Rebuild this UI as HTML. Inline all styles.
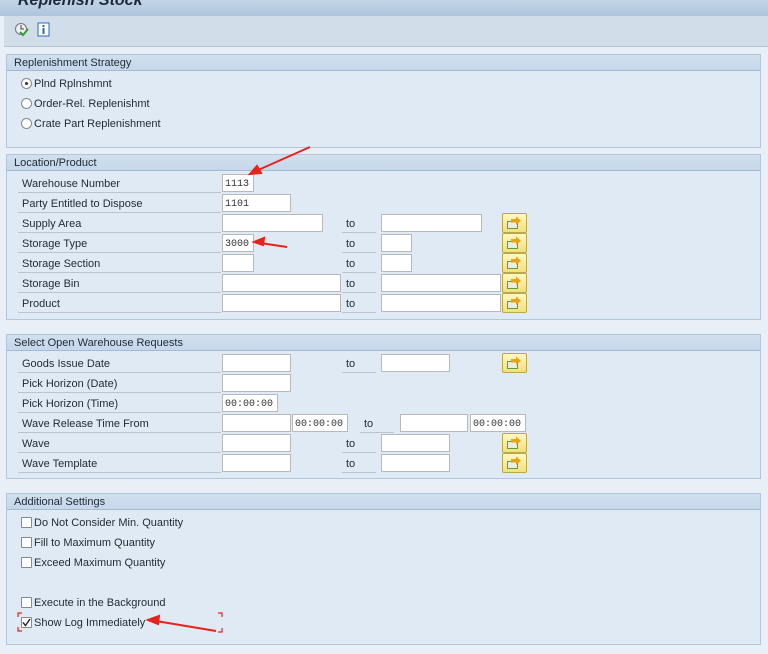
<!DOCTYPE html>
<html><head><meta charset="utf-8"><style>
*{margin:0;padding:0;box-sizing:border-box}
body{width:768px;height:654px;background:#e9eff6;font-family:"Liberation Sans",sans-serif;font-size:11px;color:#1f2a36;position:relative;overflow:hidden}
.a{position:absolute}
.title{left:0;top:0;width:768px;height:16px;background:linear-gradient(#c3d4e5,#adc5dd)}
.title span{position:absolute;left:18px;top:-8px;font-size:16px;font-weight:bold;font-style:italic;color:#1c2a3a}
.tb{left:4px;top:16px;width:764px;height:31px;background:#d1dee9;border-bottom:1px solid #b3c3d1}
.grp{position:absolute;left:6px;width:755px;background:#dfeaf4;border:1px solid #b1c6dc}
.gh{height:16px;background:linear-gradient(#d2e0ee,#c5d7ea);border-bottom:1px solid #a2bbd4;padding-left:7px;line-height:16px;font-size:11px}
.lbl{position:absolute;left:18px;width:203px;height:20px;border-bottom:1px solid #b9c4cf;padding-left:4px;line-height:20px;padding-top:1px}
.to{position:absolute;width:34px;height:20px;border-bottom:1px solid #b9c4cf;padding-left:4px;line-height:20px;padding-top:1px}
.in{position:absolute;height:18px;background:#fff;border:1px solid #b8b8b8;font-family:"Liberation Mono",monospace;font-size:10px;line-height:17px;padding-left:2px;padding-top:1px;color:#333}
.btn{position:absolute;width:25px;height:20px;border:1px solid #b9a84a;border-radius:2px;background:linear-gradient(#fff8c4,#f3df7a)}
.btn svg{position:absolute;left:4px;top:2px}
.rad{position:absolute;width:11px;height:11px;border:1px solid #888;border-radius:50%;background:#fff}
.cb{position:absolute;width:11px;height:11px;border:1px solid #888;background:#fff;border-radius:1px}
.t{position:absolute;line-height:14px}
</style></head><body>
<div class="a title"><span>Replenish Stock</span></div>
<div class="a tb"></div>
<svg class="a" style="left:14px;top:22px" width="36" height="16"><circle cx="7" cy="7" r="5.5" fill="#eee" stroke="#777"/><path d="M7 3v4h3" stroke="#444" fill="none"/><path d="M6 10l3 3 5-6" stroke="#3a9a3a" stroke-width="2" fill="none"/><rect x="24" y="1" width="11" height="13" fill="#fff" stroke="#2a6ab5"/><rect x="28.5" y="3" width="2" height="2" fill="#2a6ab5"/><rect x="28.5" y="6" width="2" height="6" fill="#2a6ab5"/></svg>

<div class="grp" style="top:54px;height:94px"><div class="gh">Replenishment Strategy</div></div>
<div class="rad" style="left:21px;top:78px"><div style="position:absolute;left:3px;top:3px;width:3px;height:3px;border-radius:50%;background:#333"></div></div><div class="t" style="left:34px;top:77px">Plnd Rplnshmnt</div>
<div class="rad" style="left:21px;top:98px"></div><div class="t" style="left:34px;top:97px">Order-Rel. Replenishmt</div>
<div class="rad" style="left:21px;top:118px"></div><div class="t" style="left:34px;top:117px">Crate Part Replenishment</div>

<div class="grp" style="top:154px;height:166px"><div class="gh">Location/Product</div></div>
<div class="lbl" style="top:173px">Warehouse Number</div><div class="in" style="left:222px;top:174px;width:32px">1113</div>
<div class="lbl" style="top:193px">Party Entitled to Dispose</div><div class="in" style="left:222px;top:194px;width:69px">1101</div>
<div class="lbl" style="top:213px">Supply Area</div><div class="in" style="left:222px;top:214px;width:101px"></div><div class="to" style="left:342px;top:213px">to</div><div class="in" style="left:381px;top:214px;width:101px"></div><div class="btn" style="left:502px;top:213px"></div>
<div class="lbl" style="top:233px">Storage Type</div><div class="in" style="left:222px;top:234px;width:32px">3000</div><div class="to" style="left:342px;top:233px">to</div><div class="in" style="left:381px;top:234px;width:31px"></div><div class="btn" style="left:502px;top:233px"></div>
<div class="lbl" style="top:253px">Storage Section</div><div class="in" style="left:222px;top:254px;width:32px"></div><div class="to" style="left:342px;top:253px">to</div><div class="in" style="left:381px;top:254px;width:31px"></div><div class="btn" style="left:502px;top:253px"></div>
<div class="lbl" style="top:273px">Storage Bin</div><div class="in" style="left:222px;top:274px;width:119px"></div><div class="to" style="left:342px;top:273px">to</div><div class="in" style="left:381px;top:274px;width:120px"></div><div class="btn" style="left:502px;top:273px"></div>
<div class="lbl" style="top:293px">Product</div><div class="in" style="left:222px;top:294px;width:119px"></div><div class="to" style="left:342px;top:293px">to</div><div class="in" style="left:381px;top:294px;width:120px"></div><div class="btn" style="left:502px;top:293px"></div>

<div class="grp" style="top:334px;height:145px"><div class="gh">Select Open Warehouse Requests</div></div>
<div class="lbl" style="top:353px">Goods Issue Date</div><div class="in" style="left:222px;top:354px;width:69px"></div><div class="to" style="left:342px;top:353px">to</div><div class="in" style="left:381px;top:354px;width:69px"></div><div class="btn" style="left:502px;top:353px"></div>
<div class="lbl" style="top:373px">Pick Horizon (Date)</div><div class="in" style="left:222px;top:374px;width:69px"></div>
<div class="lbl" style="top:393px">Pick Horizon (Time)</div><div class="in" style="left:222px;top:394px;width:56px">00:00:00</div>
<div class="lbl" style="top:413px">Wave Release Time From</div><div class="in" style="left:222px;top:414px;width:69px"></div><div class="in" style="left:292px;top:414px;width:56px">00:00:00</div><div class="to" style="left:360px;top:413px">to</div><div class="in" style="left:400px;top:414px;width:68px"></div><div class="in" style="left:470px;top:414px;width:56px">00:00:00</div>
<div class="lbl" style="top:433px">Wave</div><div class="in" style="left:222px;top:434px;width:69px"></div><div class="to" style="left:342px;top:433px">to</div><div class="in" style="left:381px;top:434px;width:69px"></div><div class="btn" style="left:502px;top:433px"></div>
<div class="lbl" style="top:453px">Wave Template</div><div class="in" style="left:222px;top:454px;width:69px"></div><div class="to" style="left:342px;top:453px">to</div><div class="in" style="left:381px;top:454px;width:69px"></div><div class="btn" style="left:502px;top:453px"></div>

<div class="grp" style="top:493px;height:152px"><div class="gh">Additional Settings</div></div>
<div class="cb" style="left:21px;top:517px"></div><div class="t" style="left:34px;top:516px">Do Not Consider Min. Quantity</div>
<div class="cb" style="left:21px;top:537px"></div><div class="t" style="left:34px;top:536px">Fill to Maximum Quantity</div>
<div class="cb" style="left:21px;top:557px"></div><div class="t" style="left:34px;top:556px">Exceed Maximum Quantity</div>
<div class="cb" style="left:21px;top:597px"></div><div class="t" style="left:34px;top:596px">Execute in the Background</div>
<div class="cb" style="left:21px;top:617px"><svg width="9" height="9" style="position:absolute;left:0;top:0"><path d="M1 4.5l2.5 3L8 1" stroke="#222" stroke-width="1.4" fill="none"/></svg></div><div class="t" style="left:34px;top:616px">Show Log Immediately</div>

<svg class="a" style="left:0;top:0" width="768" height="654">
<defs><g id="ic"><rect x="1.5" y="6.5" width="10" height="7" fill="#e6f0e0" stroke="#5aa040"/><rect x="5" y="4" width="6" height="3.5" fill="#e9a21a"/><path d="M10 1.5l5 4.2-5 4.2z" fill="#e9a21a"/></g></defs>
<use href="#ic" x="506" y="215"/><use href="#ic" x="506" y="235"/><use href="#ic" x="506" y="255"/><use href="#ic" x="506" y="275"/><use href="#ic" x="506" y="295"/>
<use href="#ic" x="506" y="355"/><use href="#ic" x="506" y="435"/><use href="#ic" x="506" y="455"/>
<g stroke="#e8231c" stroke-width="2" fill="none">
<line x1="310" y1="147" x2="256" y2="171"/><path d="M250 174l11-1-4-7z" fill="#e8231c"/>
<line x1="287" y1="247" x2="260" y2="243"/><path d="M254 242l10-4-1 7z" fill="#e8231c"/>
<line x1="216" y1="631" x2="156" y2="621"/><path d="M148 620l11-4-1 8z" fill="#e8231c"/>
<path d="M18 617v-4h4M218 613h4v4M18 627v4h4M218 632h4v-4" stroke-width="1.2"/>
</g></svg>
</body></html>
